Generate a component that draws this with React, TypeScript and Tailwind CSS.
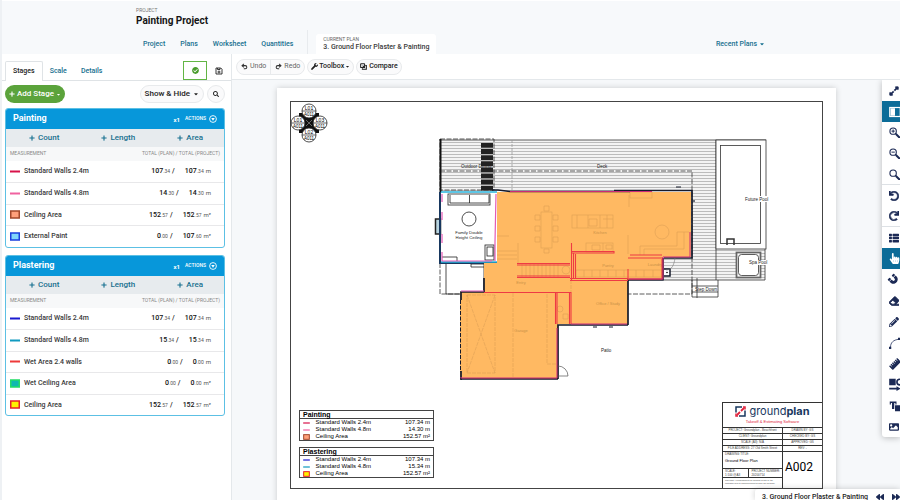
import React from "react";
import {
  FaBackward,
  FaCaretDown,
  FaCheckCircle,
  FaEraser,
  FaExpandAlt,
  FaForward,
  FaHandPointer,
  FaImage,
  FaMagnet,
  FaPencilAlt,
  FaPlus,
  FaRedo,
  FaRulerHorizontal,
  FaSearch,
  FaThList,
  FaUndo,
  FaWrench,
} from "react-icons/fa";
import { Redo2, Undo2 } from "lucide-react";

type Swatch = { kind: "line" | "box"; stroke: string; fill?: string };
type Measure = { name: string; plan: string; project: string; unit: string; swatch: Swatch };

const painting: Measure[] = [
  { name: "Standard Walls 2.4m", plan: "107.34", project: "107.34", unit: "m", swatch: { kind: "line", stroke: "#d8134a" } },
  { name: "Standard Walls 4.8m", plan: "14.30", project: "14.30", unit: "m", swatch: { kind: "line", stroke: "#f062a0" } },
  { name: "Ceiling Area", plan: "152.57", project: "152.57", unit: "m²", swatch: { kind: "box", stroke: "#a3482a", fill: "#ffa07a" } },
  { name: "External Paint", plan: "0.00", project: "107.60", unit: "m²", swatch: { kind: "box", stroke: "#1a3fe0", fill: "#7fd6fb" } },
];

const plastering: Measure[] = [
  { name: "Standard Walls 2.4m", plan: "107.34", project: "107.34", unit: "m", swatch: { kind: "line", stroke: "#1a1ad0" } },
  { name: "Standard Walls 4.8m", plan: "15.34", project: "15.34", unit: "m", swatch: { kind: "line", stroke: "#109ac0" } },
  { name: "Wet Area 2.4 walls", plan: "0.00", project: "0.00", unit: "m", swatch: { kind: "line", stroke: "#ee3a3a" } },
  { name: "Wet Ceiling Area", plan: "0.00", project: "0.00", unit: "m²", swatch: { kind: "box", stroke: "#22dd66", fill: "#10b8b0" } },
  { name: "Ceiling Area", plan: "152.57", project: "152.57", unit: "m²", swatch: { kind: "box", stroke: "#e8202a", fill: "#fff200" } },
];

function SwatchMark({ s, small }: { s: Swatch; small?: boolean }) {
  return (
    <svg viewBox="0 0 10 9" className={small ? "block h-[6px] w-[7px]" : "block h-[9px] w-[10px]"} aria-hidden="true">
      {s.kind === "line" ? (
        <path d="M0 4.5h10" stroke={s.stroke} strokeWidth="1.8" />
      ) : (
        <rect x="0.75" y="1" width="8.5" height="7" fill={s.fill} stroke={s.stroke} strokeWidth="1.5" />
      )}
    </svg>
  );
}

function Amount({ value }: { value: string }) {
  const [whole, part] = value.split(".");
  return (
    <>
      <span className="text-[7px] font-medium text-[#111]">{whole}</span>
      <span className="text-[5px] text-[#555]">.{part}</span>
    </>
  );
}

function StageCard({ title, rows }: { title: string; rows: Measure[] }) {
  return (
    <section className="overflow-hidden rounded-[3px] border border-[#5cc0e4] bg-white">
      <header className="flex h-[20px] items-center justify-between bg-[#0797da] px-[7px] text-white">
        <h2 className="text-[9px] font-bold">{title}</h2>
        <div className="flex items-center gap-[5px]">
          <span className="text-[6px] font-bold">x1</span>
          <button className="flex items-center gap-[3px] text-[5px] font-medium">
            ACTIONS
            <svg viewBox="0 0 16 16" className="size-[8px]" fill="none" stroke="white" strokeWidth="1.8" aria-hidden="true">
              <circle cx="8" cy="8" r="6.8" />
              <path d="M4.5 5.800h7L8 11.500z" fill="white" stroke="none" />
            </svg>
          </button>
        </div>
      </header>
      <div className="flex h-[18px] items-center justify-between bg-[#e7ebee] pr-[21px] pl-[23px] text-[8px] font-medium text-[#17708f]">
        {["Count", "Length", "Area"].map((label) => (
          <button key={label} className="flex items-center gap-[3px]">
            <FaPlus className="size-[6px]" />
            {label}
          </button>
        ))}
      </div>
      <table className="w-full border-collapse">
        <thead>
          <tr className="h-[14px] bg-[#f7f8f9] text-[5px] text-[#888]">
            <th className="pl-1 text-left font-normal" colSpan={2}>MEASUREMENT</th>
            <th className="pr-1 text-right font-normal whitespace-nowrap">TOTAL (PLAN) / TOTAL (PROJECT)</th>
          </tr>
        </thead>
        <tbody>
          {rows.map((r) => (
            <tr key={r.name} className="border-b border-[#e8e8ea] last:border-b-0 odd:h-[21px] even:h-[22px]">
              <td className="w-[18px] p-0 pl-1"><SwatchMark s={r.swatch} /></td>
              <td className="p-0 text-[7px] leading-[10px] font-medium whitespace-nowrap text-[#3a3a3a]">{r.name}</td>
              <td className="p-0 pr-[13px] text-right text-[7px] leading-[10px] whitespace-nowrap">
                <Amount value={r.plan} />
                <span className="mr-[10px] ml-[2px] font-medium text-[#222]">/</span>
                <Amount value={r.project} />
                <span className="ml-[2px] text-[6px] text-[#555]">{r.unit}</span>
              </td>
            </tr>
          ))}
        </tbody>
      </table>
    </section>
  );
}

function CopyIcon({ className }: { className: string }) {
  return (
    <svg viewBox="0 0 16 16" className={className} fill="none" stroke="currentColor" strokeWidth="2.4" aria-hidden="true">
      <rect x="1.5" y="1.5" width="9" height="9" rx="1" />
      <path d="M12 5.5h2.500v9h-9V12M6 6l4 4" />
    </svg>
  );
}

function SaveIcon() {
  return (
    <svg viewBox="0 0 16 16" className="size-[8px] text-[#222]" fill="none" stroke="currentColor" strokeWidth="1.8" aria-hidden="true">
      <path d="M2 2h9.5L14 4.500V14H2z" />
      <path d="M5 2v3h5V2" />
      <circle cx="8" cy="10" r="2" />
    </svg>
  );
}

function LensIcon({ mark }: { mark?: string }) {
  return (
    <svg viewBox="0 0 20 20" className="size-[11px]" fill="none" stroke="currentColor" aria-hidden="true">
      <circle cx="7.5" cy="7.5" r="5.8" strokeWidth="2" />
      <path d="M12 12l2 2" strokeWidth="2" />
      <path d="M13.500 13.500l5 5" strokeWidth="3.600" strokeLinecap="round" />
      {mark && <path d={mark} strokeWidth="1.800" />}
    </svg>
  );
}

function LegendTable({ title, rows }: { title: string; rows: Measure[] }) {
  return (
    <table className="w-[135px] border-collapse border border-[#444] text-[6px] leading-[7px] text-black">
      <thead>
        <tr className="border-b border-[#444]">
          <th colSpan={3} className="px-[3px] py-0 text-left text-[7px] leading-[7px] font-bold">{title}</th>
        </tr>
      </thead>
      <tbody>
        {rows.map((r) => (
          <tr key={r.name}>
            <td className="w-[16px] p-0 pl-[3px]"><SwatchMark s={r.swatch} small /></td>
            <td className="p-0">{r.name}</td>
            <td className="p-0 pr-[3px] text-right">{r.plan} {r.unit}</td>
          </tr>
        ))}
      </tbody>
    </table>
  );
}

const titleRows = [
  ["PROJECT: Groundplan - Beachfront", "DRAWN BY: GS"],
  ["CLIENT: Groundplan", "CHECKED BY: GS"],
  ["SCALE (A3): N/A", "APPROVED: GS"],
  ["FILE ADDRESS: 27 Old Smith Street", "REV: -"],
];

function TitleBlock() {
  return (
    <div className="w-[100px] border-t border-l border-[#333] font-['Liberation_Sans',sans-serif] text-[3px] leading-[5px] text-[#444]">
      <div className="flex h-[24px] flex-col items-center">
        <div className="flex items-center gap-[3px] font-['Inter',sans-serif] text-[11px] leading-[16px] text-[#17375e]">
          <svg viewBox="0 0 22 22" className="size-[11px]" fill="none" strokeWidth="3" aria-hidden="true">
            <path d="M2 13V2h12" stroke="#17375e" />
            <path d="M20 9v11H8" stroke="#17375e" />
            <path d="M2 15v5h4M16 2h4v5" stroke="#e0233c" />
            <path d="M4 18 10 12M12 10l6-6" stroke="#e0233c" strokeWidth="3.600" />
          </svg>
          <span>ground<b>plan</b></span>
        </div>
        <p className="text-[4px] leading-[5px] text-[#e0233c]">Takeoff &amp; Estimating Software</p>
      </div>
      {titleRows.map(([a, b]) => (
        <div key={a} className="flex h-[6px] border-t border-[#333]">
          <span className="w-[60px] border-r border-[#333] text-center whitespace-nowrap">{a}</span>
          <span className="flex-1 text-center whitespace-nowrap">{b}</span>
        </div>
      ))}
      <div className="flex h-[37px] border-t border-[#333]">
        <div className="flex w-[60px] flex-col border-r border-[#333]">
          <div className="h-[16px] px-[2px]">
            <p>DRAWING TITLE:</p>
            <p className="text-[4px] leading-[7px] text-black">Ground Floor Plan</p>
          </div>
          <div className="flex h-[10px] border-y border-[#333] leading-[4px]">
            <p className="w-[30px] border-r border-[#333] px-[2px]">SCALE:<br />1:100 @A3</p>
            <p className="flex-1 px-[2px] whitespace-nowrap">PROJECT NUMBER:<br />20200714</p>
          </div>
          <p className="px-[2px] pt-[1px] text-[2px] leading-[3px]">Copyright. All dimensions to be checked on site by the contractor prior to commencement of work. Do not scale.</p>
        </div>
        <div className="flex flex-1 items-center pb-[5px] pl-[2px] font-['Roboto',sans-serif] text-[12px] text-black">A002</div>
      </div>
    </div>
  );
}

function Compass() {
  const marks = [
    [309, 111, "L01"],
    [298, 123, "L01"],
    [320, 123, "L03"],
    [309, 135, "L02"],
  ] as const;
  return (
    <g>
      <path d="M299 113h20v20h-20z" fill="#111" />
      {marks.map(([x, y, t]) => (
        <g key={`${x}-${y}`}>
          <circle cx={x} cy={y} r="7" fill="white" stroke="#222" strokeWidth="0.8" />
          <path d={`M${x - 7} ${y}h14`} stroke="#222" strokeWidth="0.7" />
          <text x={x} y={y - 1} fontSize="5" textAnchor="middle">{t}</text>
          <text x={x} y={y + 5} fontSize="4.500" textAnchor="middle">A011</text>
        </g>
      ))}
      <path d="M305.500 119.500l7 7M312.500 119.500l-7 7" stroke="#111" strokeWidth="2.500" />
      <path d="M306 120l6 6M312 120l-6 6" stroke="#bbb" strokeWidth="0.5" />
    </g>
  );
}

function FloorPlan() {
  const house =
    "M497 192H691V257H663V280H628V324H558V379H460V292H484V263H497z";
  return (
    <svg viewBox="291 102 531 300" className="block w-full font-['Liberation_Sans',sans-serif]" role="img" aria-label="Ground floor plan">
      <defs>
        <pattern id="deck" width="3" height="3" patternUnits="userSpaceOnUse">
          <rect width="3" height="3" fill="#f3f3f3" />
          <path d="M0 1.5h3" stroke="#b4b4b4" strokeWidth="0.9" />
        </pattern>
      </defs>
      <Compass />

      <path d="M440 140H716V249H765V280H664V258H692V191H440z" fill="url(#deck)" />
      <g fill="none" stroke="#333" strokeWidth="0.8">
        <path d="M440 140H766M716 140V280M664 280H765V249" />
        <rect x="716" y="140" width="50" height="109" fill="white" />
        <rect x="720.5" y="145.500" width="40" height="98" />
        <path d="M727 245v-6h7v6" strokeWidth="1.5" />
        <rect x="736.500" y="252.500" width="24" height="25" fill="white" stroke="#666" strokeWidth="1.800" />
        <rect x="738.500" y="254.500" width="20" height="21" rx="3" />
        <path d="M692 280v17h26v-17M692 286h26M692 292h26M697 278v20" />
        <path d="M512 140v50" stroke="#999" strokeDasharray="3 1" />
        <path d="M440 171H692V294H592M440 139h54v51h-54zM440 263v31h20" strokeDasharray="5 1.500" />
      </g>
      <path d="M440.500 139v53" stroke="#111" strokeWidth="2" />
      <path d="M487 143v48" stroke="#222" strokeWidth="12" strokeDasharray="4.800 1.300" />
      <g fontSize="4.500" fill="#222">
        <rect x="743" y="196" width="24" height="6" fill="white" />
        <text x="745" y="201">Future Pool</text>
        <rect x="750" y="260" width="16" height="5" fill="white" />
        <text x="749" y="264">Spa Pool</text>
        <text x="461" y="168">Outdoor Dining</text>
        <text x="597" y="168">Deck</text>
        <text x="695" y="291">Step Down</text>
        <text x="601" y="352">Patio</text>
      </g>

      <rect x="440" y="192" width="57" height="71" fill="white" />
      <g fill="none" stroke="#222" strokeWidth="0.8">
        <path d="M446 264v30h14M484 264h-13v3h13M484 264v28" />
        <rect x="448" y="194" width="42" height="11" />
        <path d="M450 195v8h39v-8M469.500 195v8" />
        <circle cx="469" cy="219" r="7" />
        <rect x="485" y="245" width="9" height="15" />
        <rect x="487" y="247" width="6" height="9" />
        <path d="M442 257h15v4" />
        <rect x="435.500" y="219" width="5" height="15" fill="#b8d4e0" strokeWidth="1.500" />
      </g>
      <g fontSize="4.300" textAnchor="middle" fill="#222">
        <text x="469" y="234">Family Double</text>
        <text x="469" y="239">Height Ceiling</text>
      </g>
      <path d="M440 192v71h57" fill="none" stroke="#17375e" strokeWidth="2" />
      <path d="M441 192h56M441 262h56" stroke="#2ab4dd" strokeWidth="1.500" />
      <path d="M442 194v8M442 212v8M442 234v9M442 252v9M442 261h50M496 194l-1 48v19" fill="none" stroke="#e35ab5" strokeWidth="1.200" />

      <path d={house} fill="#ffb962" />
      <g fill="none" stroke="#dda055" strokeWidth="0.6">
        <rect x="541" y="212" width="11" height="36" />
        <path d="M535 215h5v5h-5zM535 226h5v5h-5zM535 237h5v5h-5zM553 215h5v5h-5zM553 226h5v5h-5zM553 237h5v5h-5zM544 206h5v5h-5zM544 249h5v4h-5z" />
        <rect x="572" y="215" width="41" height="13" />
        <path d="M577 215v13M588 215v13M600 215v13M607 215v13M603 219h10M589 219h8v7h-8z" />
        <rect x="586" y="243" width="27" height="9" />
        <path d="M592 245h8v5h-8zM603 243v9M606 245h6v4h-6z" />
        <rect x="630" y="192" width="22" height="6" />
        <circle cx="662" cy="232" r="7" />
        <path d="M640 255v-9h37v-14h12M644 255v-6h40v-17M628 235v19M629 195v12" />
        <path d="M497 251h20M497 255h20M497 259h20M518 243v20M497 236h12" />
        <path d="M522 264v13M526 264v13M530 264v13M534 264v13M538 264v13M542 264v13M546 264v13M550 264v13M554 264v13M558 264v13" />
        <circle cx="566" cy="270" r="4" />
        <path d="M576 270h86v7h-86zM584 270v7M592 270v7M600 270v7M608 270v7M616 270v7M624 270v7M636 270v7M644 270v7M653 270v7" />
        <path d="M467 295h28v78h-28zM467 295l28 78M495 295l-28 78M513 293v84M547 294v70h9M571 280v12" strokeDasharray="4 1" />
        <circle cx="560" cy="309" r="3" />
        <path d="M563 314h5v5h-5z" />
      </g>
      <g fontSize="4" fill="#c99148" textAnchor="middle">
        <text x="600" y="234">Kitchen</text>
        <text x="608" y="267">Pantry</text>
        <text x="655" y="266">Laundry</text>
        <text x="521" y="284">Entry</text>
        <text x="608" y="305">Office / Study</text>
        <text x="521" y="332">Garage</text>
      </g>

      <g fill="none" stroke="#151a2b" strokeWidth="1.700">
        <path d="M492 190h6l12 1.500H630M614 190.500h78V258H664M663 258v22h-35v45M628 325h-70v54M461 379h97M461 300v-8h23v-14M461 371v9" />
        <path d="M460.500 300v72" strokeWidth="1" strokeDasharray="4 1.500" />
        <path d="M558 366a10 10 0 0 1 10 10h-10" stroke="#555" strokeWidth="0.7" />
        <path d="M664 269h6v7h-6" fill="white" strokeWidth="1.500" />
        <path d="M666 270c6 0 8-5 9-12" stroke="#777" strokeWidth="0.6" />
        <path d="M676 187h5M694 202v-2M593 327h4M609 327h4" strokeWidth="1.200" />
      </g>
      <circle cx="667" cy="272.500" r="0.8" />
      <g fill="none" stroke="#ee3a44" strokeWidth="1.100">
        <path d="M484 292.500h87M571 292v32M569.500 293v31M557 293v31M555.500 293v31" />
        <path d="M517 263.500h53M517 265h53M517 276h53M517 277.500h53" />
        <path d="M571.500 243v37M573.500 253v26M575.500 254v25M572 251.500h42v1.500h-42" />
        <path d="M570 278.500h58M570 280.500h58M628 269v11M630 255h32M628 258h35M662 259v20h-34" />
      </g>
      <g fill="none" stroke="#cc2a78" strokeWidth="1">
        <path d="M510 191.500h142M690 232v25h-27v22h-34M627 324h-56M557 328v50h-96v-1" />
        <path d="M484 291h-23" stroke="#e35ab5" />
      </g>
    </svg>
  );
}

const tools: { label: string; icon: React.ReactNode; active?: boolean; rule?: boolean }[] = [
  { label: "Full screen", icon: <FaExpandAlt className="size-[10px]" stroke="currentColor" strokeWidth="30" /> },
  {
    label: "Side panel",
    active: true,
    icon: (
      <svg viewBox="0 0 16 16" className="size-[12px]" fill="none" stroke="currentColor" strokeWidth="1.6">
        <rect x="1" y="2" width="14" height="12" />
        <path d="M2 3h6v10H2z" fill="currentColor" stroke="none" />
      </svg>
    ),
  },
  { label: "Zoom in", icon: <LensIcon mark="M4.500 7.500h6M7.500 4.500v6" /> },
  { label: "Zoom out", icon: <LensIcon mark="M4.500 7.500h6" /> },
  { label: "Zoom to area", icon: <LensIcon />, rule: true },
  { label: "Rotate left", icon: <FaUndo className="size-[10px]" stroke="currentColor" strokeWidth="30" /> },
  { label: "Rotate right", icon: <FaRedo className="size-[10px]" stroke="currentColor" strokeWidth="30" />, rule: true },
  { label: "List", icon: <FaThList className="size-[10px]" /> },
  { label: "Select", icon: <FaHandPointer className="size-[11px]" />, active: true },
  { label: "Snap", icon: <FaMagnet className="size-[9px] -rotate-45" /> },
  { label: "Erase", icon: <FaEraser className="size-[10px]" stroke="currentColor" strokeWidth="40" /> },
  { label: "Draw", icon: <FaPencilAlt className="size-[10px]" /> },
  {
    label: "Arc",
    icon: (
      <svg viewBox="0 0 16 16" className="size-[12px]" fill="none" stroke="currentColor" strokeWidth="1">
        <path d="M2 14C2 7 6 4 13 3" />
        <path d="M0 13h3v3H0zM12 1h3v3h-3z" fill="currentColor" stroke="none" />
      </svg>
    ),
  },
  { label: "Ruler", icon: <FaRulerHorizontal className="size-[12px] -rotate-45" /> },
  {
    label: "Count shapes",
    icon: (
      <svg viewBox="0 0 18 16" className="h-[13px] w-[15px]" fill="none" stroke="currentColor" strokeWidth="2">
        <path d="M0 1h8v8H0z" fill="currentColor" stroke="none" />
        <circle cx="13" cy="5" r="3.500" />
        <path d="M0 13h10" />
        <path d="M9 10l5 3-5 3z" fill="currentColor" stroke="none" />
      </svg>
    ),
  },
  {
    label: "Text",
    icon: (
      <svg viewBox="0 0 16 16" className="size-[12px]" fill="currentColor">
        <path d="M1 2h9v4H8.500V4H7v8H4V4H2.500v2H1zM8 7h7v8H8z" />
      </svg>
    ),
  },
  { label: "Image", icon: <FaImage className="size-[10px]" /> },
];

export default function App() {
  return (
    <div className="flex h-screen flex-col overflow-hidden border-l-2 border-[#eef1f4] bg-white font-['Roboto',sans-serif] text-[#222]">
      <header className="flex h-[54px] shrink-0 flex-col justify-between border-t border-white bg-[#f7f9fb] pl-[134px]">
        <div className="pt-[6px]">
          <p className="text-[5px] leading-[6px] text-[#777]">PROJECT</p>
          <h1 className="text-[10px] leading-[15px] font-bold text-[#151515]">Painting Project</h1>
        </div>
        <div className="flex items-end text-[7px] font-medium text-[#17708f]">
          <nav className="flex h-[24px] items-center gap-[15px] border-r border-[#e8ebee] pt-[4px] pr-[14px] pl-[7px]">
            {["Project", "Plans", "Worksheet", "Quantities"].map((t) => (
              <a key={t} href="#">{t}</a>
            ))}
          </nav>
          <div className="ml-[8px] h-[20px] rounded-t-[3px] bg-white px-[7px] pt-[2px]">
            <p className="text-[5px] leading-[6px] font-normal text-[#666]">CURRENT PLAN</p>
            <p className="text-[7px] leading-[10px] whitespace-nowrap text-[#3a3a3a]">3. Ground Floor Plaster &amp; Painting</p>
          </div>
          <button className="mr-[135px] ml-auto flex h-[20px] items-center gap-[2px]">
            Recent Plans <FaCaretDown className="size-[6px]" />
          </button>
        </div>
      </header>

      <div className="flex min-h-0 flex-1">
        <aside className="flex w-[230px] shrink-0 flex-col border-r border-[#e4e8eb]">
          <div className="flex h-[27px] items-end border-b border-[#dfe3e6] pl-[3px] text-[7px] font-medium">
            <button className="-mb-px h-[20px] rounded-t-[2px] border border-b-0 border-[#dfe3e6] bg-white px-[7px]">Stages</button>
            <button className="h-[19px] px-[7px] pt-px text-[#17708f]">Scale</button>
            <button className="h-[19px] px-[7px] pt-px text-[#17708f]">Details</button>
            <button aria-label="Saved" className="ml-auto flex h-[19px] w-[24px] items-center justify-center border border-[#62b544] text-[#4a9c2d]">
              <FaCheckCircle className="size-[7px]" />
            </button>
            <button aria-label="Save" className="flex h-[19px] w-[24px] items-center justify-center"><SaveIcon /></button>
          </div>
          <div className="flex items-center gap-[3px] pt-1 pr-[6px] pb-[5px] pl-[3px] text-[8px] font-medium">
            <button className="mr-auto flex h-[18px] items-center gap-[2px] rounded-full bg-[#5ba33b] px-[4px] text-white">
              <FaPlus className="size-[6px]" /> Add Stage <FaCaretDown className="size-[5px]" />
            </button>
            <button className="flex h-[18px] items-center gap-[3px] rounded-full border border-[#e8eaec] bg-[#fafafb] px-[4px]">
              Show &amp; Hide <FaCaretDown className="size-[6px]" />
            </button>
            <button aria-label="Search" className="flex size-[18px] items-center justify-center rounded-full border border-[#e8eaec] bg-[#fafafb]">
              <FaSearch className="size-[6px]" />
            </button>
          </div>
          <div className="flex flex-col gap-[7px] pr-[6px] pl-[3px]">
            <StageCard title="Painting" rows={painting} />
            <StageCard title="Plastering" rows={plastering} />
          </div>
        </aside>

        <main className="flex min-w-0 flex-1 flex-col">
          <div className="flex h-[26px] shrink-0 items-center gap-[2px] border-b border-[#e4e8eb] pl-[4px] text-[7px] font-medium">
            <div className="flex h-[16px] rounded-full border border-[#e8eaec] bg-[#fafafb] font-normal text-[#666]">
              <button className="flex items-center gap-[2px] border-r border-[#e8eaec] px-1">
                <Undo2 className="size-[7px] text-[#333]" strokeWidth={3.5} /> Undo
              </button>
              <button className="flex items-center gap-[2px] px-1">
                <Redo2 className="size-[7px] text-[#333]" strokeWidth={3.5} /> Redo
              </button>
            </div>
            <button className="flex h-[16px] items-center gap-[1px] rounded-full border border-[#e8eaec] bg-[#fafafb] px-[3px]">
              <FaWrench className="size-[7px] -scale-x-100 rotate-90" /> Toolbox <FaCaretDown className="size-[5px]" />
            </button>
            <button className="flex h-[16px] items-center gap-[2px] rounded-full border border-[#e8eaec] bg-[#fafafb] px-[3px]">
              <CopyIcon className="size-[7px]" /> Compare
            </button>
          </div>

          <div className="relative flex min-h-0 flex-1 items-start overflow-hidden bg-[#f6f8fa] pt-[8px] pr-[64px] pl-[45px]">
            <div className="min-w-0 flex-1 bg-white p-[13px] pb-[40px] shadow-[0_0_6px_rgba(0,0,0,0.18)]">
              <div className="border border-[#444]">
                <FloorPlan />
                <div className="flex items-end justify-between">
                  <div className="mb-[10px] ml-2 flex flex-col gap-[6px] font-['Liberation_Sans',sans-serif]">
                    <LegendTable title="Painting" rows={painting.slice(0, 3)} />
                    <LegendTable title="Plastering" rows={[plastering[0], plastering[1], plastering[4]]} />
                  </div>
                  <TitleBlock />
                </div>
              </div>
            </div>

            <div role="toolbar" aria-label="Plan tools" className="absolute top-0 right-0 flex w-[18px] flex-col overflow-hidden rounded-bl-[3px] bg-white text-[#1c2a55] shadow-[0_1px_6px_rgba(0,0,0,0.25)]">
              {tools.map((t) => (
                <button
                  key={t.label}
                  aria-label={t.label}
                  className={`flex h-[21px] items-center pl-[7px] ${t.active ? "bg-[#0c6c98] text-white" : ""} ${t.rule ? "border-b border-[#dde1e5]" : ""}`}
                >
                  <span className="shrink-0">{t.icon}</span>
                </button>
              ))}
            </div>

            <div className="absolute right-0 bottom-0 flex h-[11px] items-start gap-[8px] rounded-tl-[3px] bg-white pt-[4px] pl-[7px] text-[7px] leading-[8px] font-medium whitespace-nowrap text-[#222] shadow-[0_0_6px_rgba(0,0,0,0.2)]">
              3. Ground Floor Plaster &amp; Painting
              <FaBackward className="size-[8px] text-[#1c2a55]" />
              <FaForward className="size-[8px] text-[#1c2a55]" />
            </div>
          </div>
        </main>
      </div>
    </div>
  );
}
